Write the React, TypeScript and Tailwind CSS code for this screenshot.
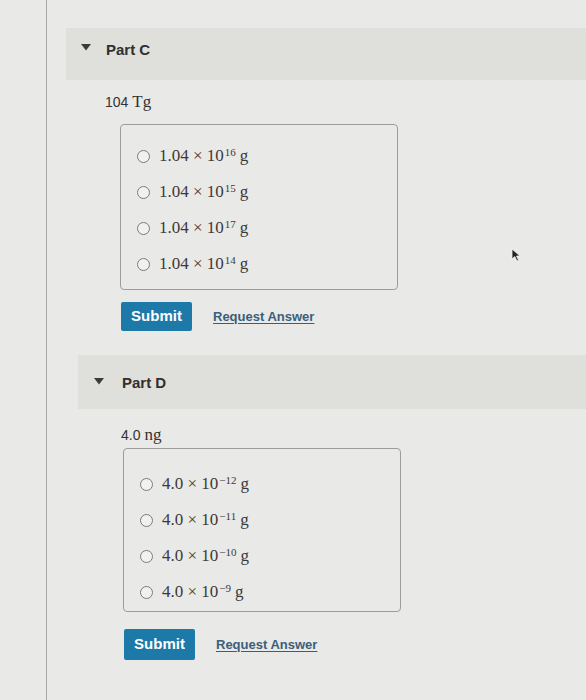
import React from 'react';

const serif = { fontFamily: '"Liberation Serif", "DejaVu Serif", serif' };

type Opt = { base: string; exp: string };

function Radio({ o }: { o: Opt }) {
  return (
    <div className="flex items-center h-[36px]">
      <span className="w-[13px] h-[13px] rounded-full border-[1.5px] border-[#7a7a7a] bg-[#f1f1ef] shrink-0" />
      <span className="ml-[9px] text-[17px] text-[#3a3a3a] whitespace-nowrap" style={serif}>
        {o.base} × 10<sup className="text-[11px] ml-[1px] mr-[4px]">{o.exp}</sup>g
      </span>
    </div>
  );
}

function Part({
  title,
  given,
  unit,
  options,
  top,
  bandLeft,
  bandH,
  triCls,
  textCls,
  labelLeft,
  labelGap,
  boxLeft,
  boxGap,
  boxCls,
  btnLeft,
  btnGap,
  btnH,
}: {
  title: string;
  given: string;
  unit: string;
  options: Opt[];
  top: string;
  bandLeft: string;
  bandH: string;
  triCls: string;
  textCls: string;
  labelLeft: string;
  labelGap: string;
  boxLeft: string;
  boxGap: string;
  boxCls: string;
  btnLeft: string;
  btnGap: string;
  btnH: string;
}) {
  return (
    <section className={top}>
      <div className={`${bandLeft} ${bandH} bg-[#dfdfdc] relative`}>
        <svg className={`absolute ${triCls}`} width="10" height="7" viewBox="0 0 10 7">
          <path d="M0 0 L10 0 L5 6.5 Z" fill="#3b3b3b" />
        </svg>
        <span className={`absolute ${textCls} text-[15px] font-semibold text-[#2f2f2f]`}>{title}</span>
      </div>
      <div className={`${labelLeft} ${labelGap} h-[20px] flex items-center text-[14px] text-[#333]`}>
        <span>{given}</span>
        <span className="ml-[4px] text-[17px]" style={serif}>{unit}</span>
      </div>
      <div className={`${boxLeft} ${boxGap} ${boxCls} w-[278px] border border-[#9d9d9b] rounded-[4px] pl-[16px]`}>
        {options.map((o) => (
          <Radio key={o.exp} o={o} />
        ))}
      </div>
      <div className={`${btnLeft} ${btnGap} flex items-center`}>
        <button className={`w-[71px] ${btnH} bg-[#1d79a8] rounded-[2px] text-white text-[15px] font-semibold`}>
          Submit
        </button>
        <a className="ml-[21px] text-[13px] font-semibold text-[#3a5e7b] underline underline-offset-2">
          Request Answer
        </a>
      </div>
    </section>
  );
}

export default function App() {
  return (
    <div
      className="relative w-full h-[700px] bg-[#e9e9e7] flex overflow-hidden"
      style={{ fontFamily: '"Liberation Sans", Arial, sans-serif' }}
    >
      <div className="w-[47px] shrink-0 border-r border-[#a8a8a6]" />
      <div className="flex-1">
        <Part
          title="Part C"
          given="104"
          unit="Tg"
          options={[
            { base: '1.04', exp: '16' },
            { base: '1.04', exp: '15' },
            { base: '1.04', exp: '17' },
            { base: '1.04', exp: '14' },
          ]}
          top="mt-[28px]"
          bandLeft="ml-[19px]"
          bandH="h-[52px]"
          triCls="left-[15px] top-[16px]"
          textCls="left-[40px] top-[11px]"
          labelLeft="ml-[58px]"
          labelGap="mt-[12px]"
          boxLeft="ml-[73px]"
          boxGap="mt-[12px]"
          boxCls="pt-[13px] h-[166px]"
          btnLeft="ml-[74px]"
          btnGap="mt-[12px]"
          btnH="h-[29px]"
        />
        <Part
          title="Part D"
          given="4.0"
          unit="ng"
          options={[
            { base: '4.0', exp: '−12' },
            { base: '4.0', exp: '−11' },
            { base: '4.0', exp: '−10' },
            { base: '4.0', exp: '−9' },
          ]}
          top="mt-[24px]"
          bandLeft="ml-[31px]"
          bandH="h-[54px]"
          triCls="left-[16px] top-[23px]"
          textCls="left-[44px] top-[17px]"
          labelLeft="ml-[74px]"
          labelGap="mt-[16px]"
          boxLeft="ml-[76px]"
          boxGap="mt-[3px]"
          boxCls="pt-[17px] h-[164px]"
          btnLeft="ml-[77px]"
          btnGap="mt-[17px]"
          btnH="h-[31px]"
        />
      </div>
      <svg className="absolute left-[511px] top-[248px]" width="12" height="14" viewBox="0 0 12 14">
        <path d="M1 1 L1 11 L3.8 8.6 L6 13 L7.6 12.2 L5.5 8 L9 8 Z" fill="#222" stroke="#f5f5f5" strokeWidth="0.8" />
      </svg>
    </div>
  );
}
